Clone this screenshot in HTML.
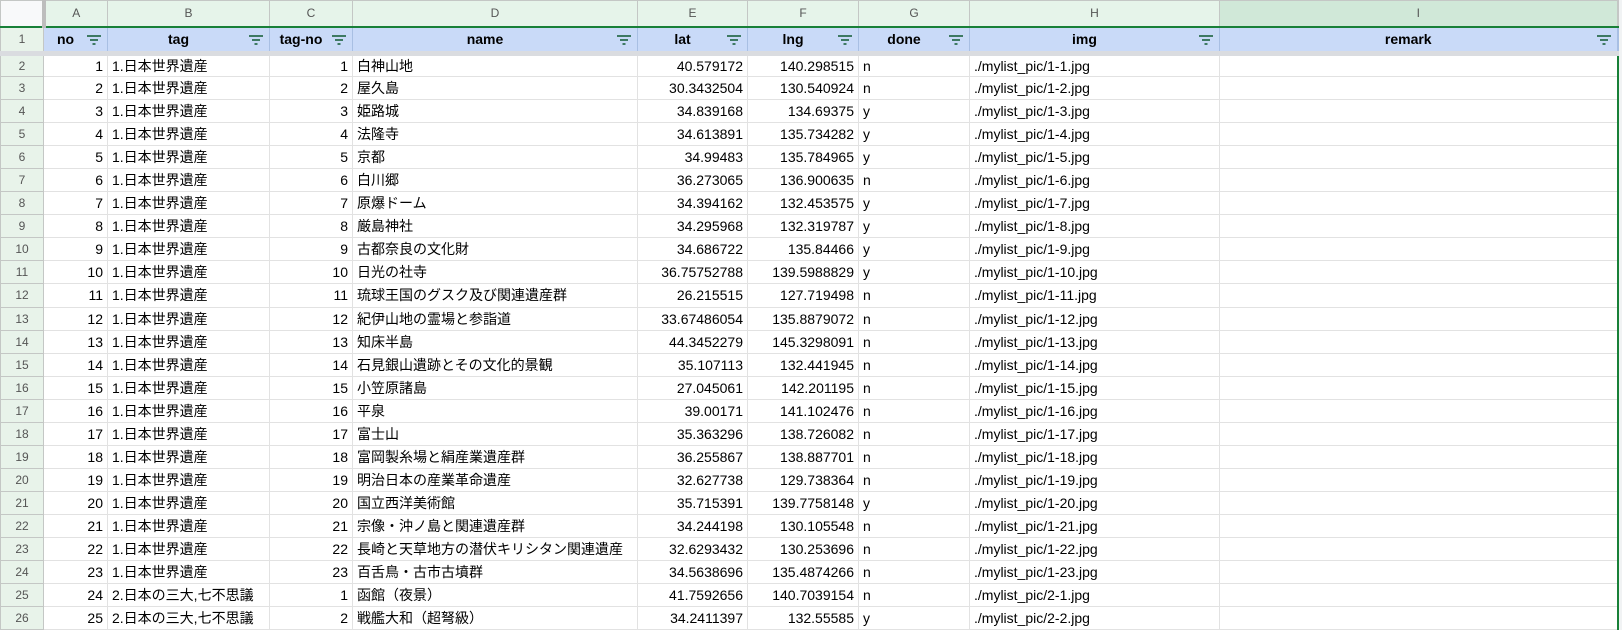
<!DOCTYPE html>
<html><head><meta charset="utf-8"><style>
body{margin:0;width:1622px;height:628px;overflow:hidden;background:#f1f3f4;font-family:"Liberation Sans","Noto Sans CJK JP",sans-serif;}
table{position:absolute;left:0;top:0;border-collapse:collapse;table-layout:fixed;width:1617px;}
td{padding:0 4px;white-space:nowrap;overflow:hidden;font-size:14px;color:#000;border:1px solid #e2e2e2;height:22px;box-sizing:border-box;background:#fff;}
tr.d td{height:23.05px;}
tr.d td:first-child{background:#e8f3ea;color:#555;font-size:12px;text-align:center;border-color:#c4c7c5;}
td.r{text-align:right;}
tr.cl td{height:26px;background:#e6f4ea;color:#555;font-size:12px;text-align:center;border-color:#c4c7c5;border-bottom:2px solid #188038;}
tr.cl td.sel{background:#d0e8d8;}
tr.h td{height:27px;background:#c9daf8;font-weight:bold;text-align:center;position:relative;border-color:#a8bfe3;border-bottom:5px solid #dadce0;padding-right:24px;vertical-align:middle;}
tr.h td:first-child{background:#e8f3ea;color:#555;font-weight:normal;font-size:12px;border-color:#c4c7c5;padding-right:4px;border-bottom-color:#dadce0;}
tr.cl td:first-child{background:#f8f9fa;border-right:4px solid #bdbdbd;}
tr.d td:first-child,tr.h td:first-child{border-right:1px solid #c4c7c5;}
.f{position:absolute;right:6px;top:7px;width:14px;height:10px;}
td:last-child{border-right:2px solid #188038;}
</style></head><body>
<table>
<colgroup><col style="width:43px"><col style="width:64px"><col style="width:162px"><col style="width:83px"><col style="width:285px"><col style="width:110px"><col style="width:111px"><col style="width:111px"><col style="width:250px"><col style="width:398px"></colgroup>
<tr class="cl"><td></td><td>A</td><td>B</td><td>C</td><td>D</td><td>E</td><td>F</td><td>G</td><td>H</td><td class="sel">I</td></tr>
<tr class="h"><td>1</td>
<td>no<svg class="f" viewBox="0 0 14 10"><path d="M0 1h14M3 5h8M5.5 9h3" stroke="#3e7a63" stroke-width="2"/></svg></td>
<td>tag<svg class="f" viewBox="0 0 14 10"><path d="M0 1h14M3 5h8M5.5 9h3" stroke="#3e7a63" stroke-width="2"/></svg></td>
<td>tag-no<svg class="f" viewBox="0 0 14 10"><path d="M0 1h14M3 5h8M5.5 9h3" stroke="#3e7a63" stroke-width="2"/></svg></td>
<td>name<svg class="f" viewBox="0 0 14 10"><path d="M0 1h14M3 5h8M5.5 9h3" stroke="#3e7a63" stroke-width="2"/></svg></td>
<td>lat<svg class="f" viewBox="0 0 14 10"><path d="M0 1h14M3 5h8M5.5 9h3" stroke="#3e7a63" stroke-width="2"/></svg></td>
<td>lng<svg class="f" viewBox="0 0 14 10"><path d="M0 1h14M3 5h8M5.5 9h3" stroke="#3e7a63" stroke-width="2"/></svg></td>
<td>done<svg class="f" viewBox="0 0 14 10"><path d="M0 1h14M3 5h8M5.5 9h3" stroke="#3e7a63" stroke-width="2"/></svg></td>
<td>img<svg class="f" viewBox="0 0 14 10"><path d="M0 1h14M3 5h8M5.5 9h3" stroke="#3e7a63" stroke-width="2"/></svg></td>
<td>remark<svg class="f" viewBox="0 0 14 10"><path d="M0 1h14M3 5h8M5.5 9h3" stroke="#3e7a63" stroke-width="2"/></svg></td></tr>
<tr class="d"><td>2</td><td class="r">1</td><td>1.日本世界遺産</td><td class="r">1</td><td>白神山地</td><td class="r">40.579172</td><td class="r">140.298515</td><td>n</td><td>./mylist_pic/1-1.jpg</td><td></td></tr>
<tr class="d"><td>3</td><td class="r">2</td><td>1.日本世界遺産</td><td class="r">2</td><td>屋久島</td><td class="r">30.3432504</td><td class="r">130.540924</td><td>n</td><td>./mylist_pic/1-2.jpg</td><td></td></tr>
<tr class="d"><td>4</td><td class="r">3</td><td>1.日本世界遺産</td><td class="r">3</td><td>姫路城</td><td class="r">34.839168</td><td class="r">134.69375</td><td>y</td><td>./mylist_pic/1-3.jpg</td><td></td></tr>
<tr class="d"><td>5</td><td class="r">4</td><td>1.日本世界遺産</td><td class="r">4</td><td>法隆寺</td><td class="r">34.613891</td><td class="r">135.734282</td><td>y</td><td>./mylist_pic/1-4.jpg</td><td></td></tr>
<tr class="d"><td>6</td><td class="r">5</td><td>1.日本世界遺産</td><td class="r">5</td><td>京都</td><td class="r">34.99483</td><td class="r">135.784965</td><td>y</td><td>./mylist_pic/1-5.jpg</td><td></td></tr>
<tr class="d"><td>7</td><td class="r">6</td><td>1.日本世界遺産</td><td class="r">6</td><td>白川郷</td><td class="r">36.273065</td><td class="r">136.900635</td><td>n</td><td>./mylist_pic/1-6.jpg</td><td></td></tr>
<tr class="d"><td>8</td><td class="r">7</td><td>1.日本世界遺産</td><td class="r">7</td><td>原爆ドーム</td><td class="r">34.394162</td><td class="r">132.453575</td><td>y</td><td>./mylist_pic/1-7.jpg</td><td></td></tr>
<tr class="d"><td>9</td><td class="r">8</td><td>1.日本世界遺産</td><td class="r">8</td><td>厳島神社</td><td class="r">34.295968</td><td class="r">132.319787</td><td>y</td><td>./mylist_pic/1-8.jpg</td><td></td></tr>
<tr class="d"><td>10</td><td class="r">9</td><td>1.日本世界遺産</td><td class="r">9</td><td>古都奈良の文化財</td><td class="r">34.686722</td><td class="r">135.84466</td><td>y</td><td>./mylist_pic/1-9.jpg</td><td></td></tr>
<tr class="d"><td>11</td><td class="r">10</td><td>1.日本世界遺産</td><td class="r">10</td><td>日光の社寺</td><td class="r">36.75752788</td><td class="r">139.5988829</td><td>y</td><td>./mylist_pic/1-10.jpg</td><td></td></tr>
<tr class="d"><td>12</td><td class="r">11</td><td>1.日本世界遺産</td><td class="r">11</td><td>琉球王国のグスク及び関連遺産群</td><td class="r">26.215515</td><td class="r">127.719498</td><td>n</td><td>./mylist_pic/1-11.jpg</td><td></td></tr>
<tr class="d"><td>13</td><td class="r">12</td><td>1.日本世界遺産</td><td class="r">12</td><td>紀伊山地の霊場と参詣道</td><td class="r">33.67486054</td><td class="r">135.8879072</td><td>n</td><td>./mylist_pic/1-12.jpg</td><td></td></tr>
<tr class="d"><td>14</td><td class="r">13</td><td>1.日本世界遺産</td><td class="r">13</td><td>知床半島</td><td class="r">44.3452279</td><td class="r">145.3298091</td><td>n</td><td>./mylist_pic/1-13.jpg</td><td></td></tr>
<tr class="d"><td>15</td><td class="r">14</td><td>1.日本世界遺産</td><td class="r">14</td><td>石見銀山遺跡とその文化的景観</td><td class="r">35.107113</td><td class="r">132.441945</td><td>n</td><td>./mylist_pic/1-14.jpg</td><td></td></tr>
<tr class="d"><td>16</td><td class="r">15</td><td>1.日本世界遺産</td><td class="r">15</td><td>小笠原諸島</td><td class="r">27.045061</td><td class="r">142.201195</td><td>n</td><td>./mylist_pic/1-15.jpg</td><td></td></tr>
<tr class="d"><td>17</td><td class="r">16</td><td>1.日本世界遺産</td><td class="r">16</td><td>平泉</td><td class="r">39.00171</td><td class="r">141.102476</td><td>n</td><td>./mylist_pic/1-16.jpg</td><td></td></tr>
<tr class="d"><td>18</td><td class="r">17</td><td>1.日本世界遺産</td><td class="r">17</td><td>富士山</td><td class="r">35.363296</td><td class="r">138.726082</td><td>n</td><td>./mylist_pic/1-17.jpg</td><td></td></tr>
<tr class="d"><td>19</td><td class="r">18</td><td>1.日本世界遺産</td><td class="r">18</td><td>富岡製糸場と絹産業遺産群</td><td class="r">36.255867</td><td class="r">138.887701</td><td>n</td><td>./mylist_pic/1-18.jpg</td><td></td></tr>
<tr class="d"><td>20</td><td class="r">19</td><td>1.日本世界遺産</td><td class="r">19</td><td>明治日本の産業革命遺産</td><td class="r">32.627738</td><td class="r">129.738364</td><td>n</td><td>./mylist_pic/1-19.jpg</td><td></td></tr>
<tr class="d"><td>21</td><td class="r">20</td><td>1.日本世界遺産</td><td class="r">20</td><td>国立西洋美術館</td><td class="r">35.715391</td><td class="r">139.7758148</td><td>y</td><td>./mylist_pic/1-20.jpg</td><td></td></tr>
<tr class="d"><td>22</td><td class="r">21</td><td>1.日本世界遺産</td><td class="r">21</td><td>宗像・沖ノ島と関連遺産群</td><td class="r">34.244198</td><td class="r">130.105548</td><td>n</td><td>./mylist_pic/1-21.jpg</td><td></td></tr>
<tr class="d"><td>23</td><td class="r">22</td><td>1.日本世界遺産</td><td class="r">22</td><td>長崎と天草地方の潜伏キリシタン関連遺産</td><td class="r">32.6293432</td><td class="r">130.253696</td><td>n</td><td>./mylist_pic/1-22.jpg</td><td></td></tr>
<tr class="d"><td>24</td><td class="r">23</td><td>1.日本世界遺産</td><td class="r">23</td><td>百舌鳥・古市古墳群</td><td class="r">34.5638696</td><td class="r">135.4874266</td><td>n</td><td>./mylist_pic/1-23.jpg</td><td></td></tr>
<tr class="d"><td>25</td><td class="r">24</td><td>2.日本の三大,七不思議</td><td class="r">1</td><td>函館（夜景）</td><td class="r">41.7592656</td><td class="r">140.7039154</td><td>n</td><td>./mylist_pic/2-1.jpg</td><td></td></tr>
<tr class="d"><td>26</td><td class="r">25</td><td>2.日本の三大,七不思議</td><td class="r">2</td><td>戦艦大和（超弩級）</td><td class="r">34.2411397</td><td class="r">132.55585</td><td>y</td><td>./mylist_pic/2-2.jpg</td><td></td></tr>
</table>
</body></html>
